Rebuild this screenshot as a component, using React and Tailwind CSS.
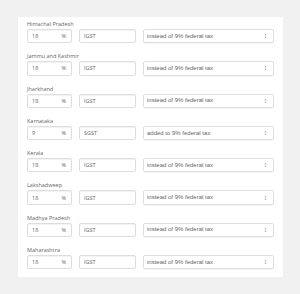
import React from 'react';

const rows = [
    { name: 'Himachal Pradesh', rate: '18', type: 'IGST', mode: 'instead of 9% federal tax' },
    { name: 'Jammu and Kashmir', rate: '18', type: 'IGST', mode: 'instead of 9% federal tax' },
    { name: 'Jharkhand', rate: '18', type: 'IGST', mode: 'instead of 9% federal tax' },
    { name: 'Karnataka', rate: '9', type: 'SGST', mode: 'added to 9% federal tax' },
    { name: 'Kerala', rate: '18', type: 'IGST', mode: 'instead of 9% federal tax' },
    { name: 'Lakshadweep', rate: '18', type: 'IGST', mode: 'instead of 9% federal tax' },
    { name: 'Madhya Pradesh', rate: '18', type: 'IGST', mode: 'instead of 9% federal tax' },
    { name: 'Maharashtra', rate: '18', type: 'IGST', mode: 'instead of 9% federal tax' },
];

const SelectArrows = () => (
    <svg width="3" height="6" viewBox="0 0 3 6" className="shrink-0">
        <path d="M0.3 2.3 L1.5 1 L2.7 2.3 Z" fill="#999" />
        <path d="M0.3 3.7 L1.5 5 L2.7 3.7 Z" fill="#999" />
    </svg>
);

const App = () => {
    return (
        <div className="w-[300px] h-[294px] bg-[#f1f1f1] pt-[17px] pl-[18px] font-['Open_Sans',sans-serif]">
            <div className="w-[265px] h-[260px] bg-white pt-[2px] px-[9px] flex flex-col gap-[8px]">
                {rows.map((row) => (
                    <div key={row.name} className="flex flex-col">
                        {/* State label */}
                        <div className="h-[10px] leading-[10px] text-[5.5px] text-[#666]">{row.name}</div>
                        <div className="flex gap-[7px] h-[14.3px]">
                            <div className="w-[45px] flex items-center justify-between px-[4px] pr-[5px] border border-[#ddd] rounded-[2px] shadow-[inset_0_1px_1px_rgba(0,0,0,0.05)] text-[5.5px] text-[#666]">
                                <span>{row.rate}</span>
                                <span>%</span>
                            </div>
                            <div className="w-[57px] flex items-center px-[4px] border border-[#ddd] rounded-[2px] shadow-[inset_0_1px_1px_rgba(0,0,0,0.05)] text-[5.5px] text-[#666]">
                                {row.type}
                            </div>
                            <div className="flex-1 flex items-center justify-between pl-[3px] pr-[6px] border border-[#ddd] rounded-[2px] shadow-[0_1px_1px_rgba(0,0,0,0.04)] text-[6px] text-[#666] font-['Liberation_Sans',sans-serif]">
                                <span>{row.mode}</span>
                                <SelectArrows />
                            </div>
                        </div>
                    </div>
                ))}
            </div>
        </div>
    );
};

export default App;
